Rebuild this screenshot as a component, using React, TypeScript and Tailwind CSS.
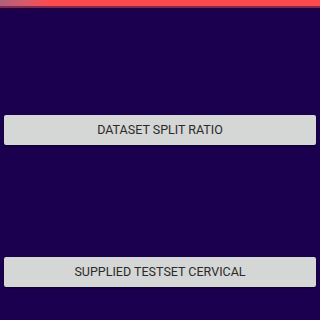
import React from 'react';

const App: React.FC = () => {
  return (
    <div className="w-[320px] h-[320px] bg-[#1b0050] flex flex-col overflow-hidden" style={{ fontFamily: 'Roboto, "Liberation Sans", sans-serif' }}>
      {/* Status / action bar strip */}
      <div className="h-[6px] bg-[#fd4a4c] flex">
        <div className="w-[50px] h-full bg-gradient-to-r from-[#b0607e] to-[#fd4a4c]"></div>
      </div>
      <div className="h-[2px] bg-[#7a2a55]"></div>
      <div className="h-[3px] bg-[#23003f]"></div>

      <div className="flex flex-col px-[4px] pt-[104px] gap-[112px]">
        <button className="h-[30px] w-full bg-[#d5d6d6] rounded-[2px] shadow-[0_1px_2px_rgba(0,0,0,0.6)] text-[#2a2a2a] text-[12.5px] flex items-center justify-center">
          DATASET SPLIT RATIO
        </button>
        <button className="h-[30px] w-full bg-[#d5d6d6] rounded-[2px] shadow-[0_1px_2px_rgba(0,0,0,0.6)] text-[#2a2a2a] text-[12.5px] flex items-center justify-center">
          SUPPLIED TESTSET CERVICAL
        </button>
      </div>
    </div>
  );
};

export default App;
